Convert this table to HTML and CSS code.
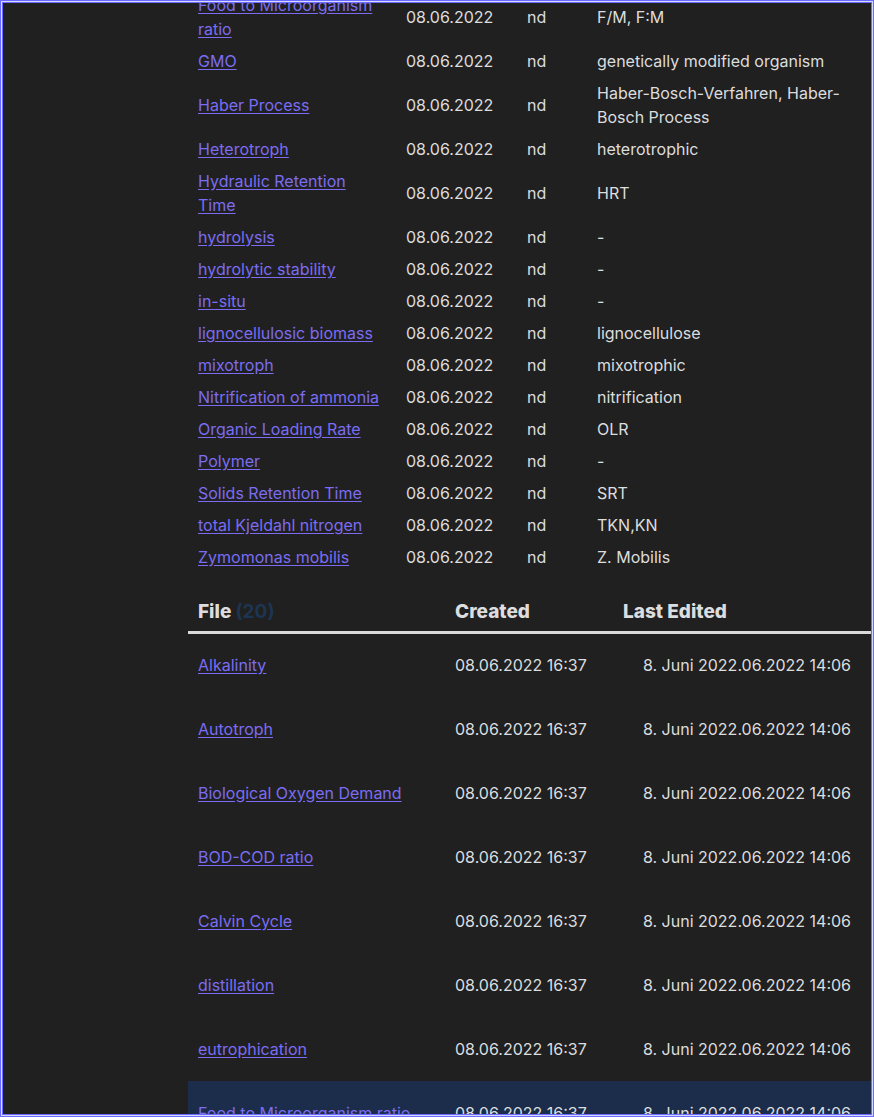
FILE: index.html
```html
<!DOCTYPE html>
<html lang="en">
<head>
<meta charset="utf-8">
<title>Glossary</title>
<link rel="stylesheet" href="styles.css">
</head>
<body>
<div class="frame-outer">
<div class="frame-mid">
<div class="viewport">
<div class="page">
  <aside class="sidebar"></aside>
  <main class="content">
    <table class="terms">
      <colgroup><col class="c1"><col class="c2"><col class="c3"><col class="c4"></colgroup>
      <tbody>
        <tr><td><a href="#">Food to Microorganism ratio</a></td><td>08.06.2022</td><td>nd</td><td>F/M, F:M</td></tr>
        <tr><td><a href="#">GMO</a></td><td>08.06.2022</td><td>nd</td><td>genetically modified organism</td></tr>
        <tr><td><a href="#">Haber Process</a></td><td>08.06.2022</td><td>nd</td><td>Haber-Bosch-Verfahren, Haber-Bosch Process</td></tr>
        <tr><td><a href="#">Heterotroph</a></td><td>08.06.2022</td><td>nd</td><td>heterotrophic</td></tr>
        <tr><td><a href="#">Hydraulic Retention Time</a></td><td>08.06.2022</td><td>nd</td><td>HRT</td></tr>
        <tr><td><a href="#">hydrolysis</a></td><td>08.06.2022</td><td>nd</td><td>-</td></tr>
        <tr><td><a href="#">hydrolytic stability</a></td><td>08.06.2022</td><td>nd</td><td>-</td></tr>
        <tr><td><a href="#">in-situ</a></td><td>08.06.2022</td><td>nd</td><td>-</td></tr>
        <tr><td><a href="#">lignocellulosic biomass</a></td><td>08.06.2022</td><td>nd</td><td>lignocellulose</td></tr>
        <tr><td><a href="#">mixotroph</a></td><td>08.06.2022</td><td>nd</td><td>mixotrophic</td></tr>
        <tr><td><a href="#">Nitrification of ammonia</a></td><td>08.06.2022</td><td>nd</td><td>nitrification</td></tr>
        <tr><td><a href="#">Organic Loading Rate</a></td><td>08.06.2022</td><td>nd</td><td>OLR</td></tr>
        <tr><td><a href="#">Polymer</a></td><td>08.06.2022</td><td>nd</td><td>-</td></tr>
        <tr><td><a href="#">Solids Retention Time</a></td><td>08.06.2022</td><td>nd</td><td>SRT</td></tr>
        <tr><td><a href="#">total Kjeldahl nitrogen</a></td><td>08.06.2022</td><td>nd</td><td>TKN,KN</td></tr>
        <tr><td><a href="#">Zymomonas mobilis</a></td><td>08.06.2022</td><td>nd</td><td>Z. Mobilis</td></tr>
      </tbody>
    </table>

    <table class="files">
      <colgroup><col class="f1"><col class="f2"><col class="f3"></colgroup>
      <thead>
        <tr><th>File <span class="count">(20)</span></th><th>Created</th><th class="edited-h">Last Edited</th></tr>
      </thead>
      <tbody>
        <tr><td><a href="#">Alkalinity</a></td><td>08.06.2022 16:37</td><td class="edited">8. Juni 2022.06.2022 14:06</td></tr>
        <tr><td><a href="#">Autotroph</a></td><td>08.06.2022 16:37</td><td class="edited">8. Juni 2022.06.2022 14:06</td></tr>
        <tr><td><a href="#">Biological Oxygen Demand</a></td><td>08.06.2022 16:37</td><td class="edited">8. Juni 2022.06.2022 14:06</td></tr>
        <tr><td><a href="#">BOD-COD ratio</a></td><td>08.06.2022 16:37</td><td class="edited">8. Juni 2022.06.2022 14:06</td></tr>
        <tr><td><a href="#">Calvin Cycle</a></td><td>08.06.2022 16:37</td><td class="edited">8. Juni 2022.06.2022 14:06</td></tr>
        <tr><td><a href="#">distillation</a></td><td>08.06.2022 16:37</td><td class="edited">8. Juni 2022.06.2022 14:06</td></tr>
        <tr><td><a href="#">eutrophication</a></td><td>08.06.2022 16:37</td><td class="edited">8. Juni 2022.06.2022 14:06</td></tr>
        <tr class="active"><td><a href="#">Food to Microorganism ratio</a></td><td>08.06.2022 16:37</td><td class="edited">8. Juni 2022.06.2022 14:06</td></tr>
        <tr><td><a href="#">GMO</a></td><td>08.06.2022 16:37</td><td class="edited">8. Juni 2022.06.2022 14:06</td></tr>
      </tbody>
    </table>
  </main>
</div>
</div>
</div>
</div>
</body>
</html>
```

FILE: styles.css
```css
* { box-sizing: border-box; }
html, body { margin: 0; padding: 0; background: #202020; }
body {
  font-family: Inter, "Noto Sans", sans-serif;
  font-size: 16px;
  line-height: 24px;
  color: #dcddde;
}
.frame-outer { border: 1px solid #6b6bff; height: 1117px; }
.frame-mid { border: 1px solid #d8d8ff; height: 1115px; }
.viewport {
  border: 1px solid #6b6bff;
  height: 1113px;
  overflow: hidden;
  background: #202020;
}
.page {
  display: flex;
  margin-top: -14px;
}
.sidebar { width: 185px; flex: none; }
.content { flex: 1; min-width: 0; }

a { color: #7b6cf2; text-decoration: underline; text-underline-offset: 2px; }

table { border-collapse: collapse; table-layout: fixed; }
.terms { width: 673px; }
.terms col.c1 { width: 208px; }
.terms col.c2 { width: 121px; }
.terms col.c3 { width: 70px; }
.terms col.c4 { width: 274px; }
.terms td { padding: 4px 10px; vertical-align: middle; }

.files { width: 683px; margin-top: 19px; }
.files col.f1 { width: 257px; }
.files col.f2 { width: 168px; }
.files col.f3 { width: 258px; }
.files th {
  text-align: left;
  font-size: 19px;
  font-weight: 800;
  padding: 8px 10px 7px;
  border-bottom: 3px solid #dadada;
  color: #dcddde;
}
.files th .count { color: #1d3552; font-weight: 700; }
.files td { height: 64px; padding: 0 10px; vertical-align: middle; }
.files td.edited { text-align: right; padding-right: 20px; }
.files tr.active td { background: #1b2d4a; }
```
